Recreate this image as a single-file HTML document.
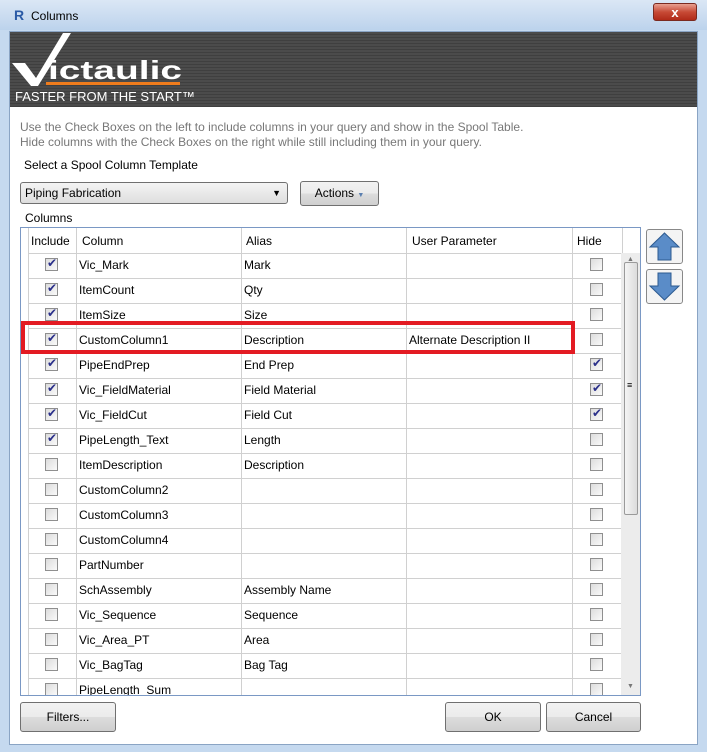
<!DOCTYPE html>
<html><head><meta charset="utf-8"><style>
body{margin:0;width:707px;height:752px;overflow:hidden;background:#c5d9ef;font-family:"Liberation Sans",sans-serif;font-size:12px;color:#000;position:relative}
.a{position:absolute}
.cb{position:absolute;width:11px;height:11px;border:1px solid #8f8f8f;background:linear-gradient(135deg,#dcdcdc,#fafafa);box-sizing:content-box}
.cb.c::after{content:"✔";position:absolute;left:1px;top:-3px;font-size:12px;color:#2a2f8a}
.btn{position:absolute;border:1px solid #707070;border-radius:3px;background:linear-gradient(#f2f2f2 0,#ebebeb 50%,#dddddd 50%,#cfcfcf 100%);text-align:center;box-sizing:border-box}
.t{position:absolute;white-space:nowrap}
</style></head><body>
<div class="a" style="left:0;top:0;width:707px;height:30px;background:linear-gradient(#dbe7f5,#bcd3ec)"></div>
<div class="a" style="left:14px;top:8px;width:10px;height:14px;color:#2a5aa6;font-weight:bold;font-size:14px;line-height:14px">R</div>
<div class="t" style="left:31px;top:9px;font-size:12px">Columns</div>
<div class="a" style="left:653px;top:3px;width:44px;height:18px;border-radius:3px;border:1px solid #7a2a20;background:linear-gradient(#e8a090,#c74a36 50%,#b02a18);color:#fff;font-weight:bold;text-align:center;line-height:17px;font-size:13px;box-sizing:border-box">x</div>
<div class="a" style="left:9px;top:31px;width:689px;height:714px;background:#fff;border:1px solid #8aa4c4;box-sizing:border-box"></div>
<div class="a" style="left:10px;top:32px;width:687px;height:75px;background:repeating-linear-gradient(#4b4b4b 0,#4b4b4b 2px,#3f3f3f 2px,#3f3f3f 3px)"></div>
<svg class="a" style="left:10px;top:32px" width="200" height="75">
<polygon points="2,31 15,31 26,46 53,1 61,1 28,54 21,54" fill="#fff"/>
<text x="38" y="47" font-family="Liberation Sans" font-weight="bold" font-size="26" fill="#fff" textLength="134" lengthAdjust="spacingAndGlyphs">ictaulic</text>
<rect x="36" y="50" width="134" height="3" fill="#f07c1c"/>
<text x="5" y="69" font-family="Liberation Sans" font-size="13" fill="#fff">FASTER FROM THE START™</text>
</svg>
<div class="t" style="left:20px;top:120px;color:#777">Use the Check Boxes on the left to include columns in your query and show in the Spool Table.</div>
<div class="t" style="left:20px;top:135px;color:#777">Hide columns with the Check Boxes on the right while still including them in your query.</div>
<div class="t" style="left:24px;top:158px">Select a Spool Column Template</div>
<div class="btn" style="left:20px;top:182px;width:268px;height:22px;text-align:left;padding-left:4px;line-height:20px;background:linear-gradient(#f4f4f4,#dedede)">Piping Fabrication<span style="position:absolute;right:6px;top:0;font-size:9px">▼</span></div>
<div class="btn" style="left:300px;top:181px;width:79px;height:25px;line-height:23px">Actions <span style="font-size:7px;color:#5a7fb0">▼</span></div>
<div class="t" style="left:25px;top:211px">Columns</div>
<div class="a" style="left:20px;top:227px;width:621px;height:469px;border:1px solid #7a98c4;box-sizing:border-box;overflow:hidden">
<div id="g"></div>
</div>
<div class="a" style="left:621px;top:253px;width:19px;height:442px;background:#ececec"></div>
<div class="a" style="left:624px;top:262px;width:14px;height:253px;border:1px solid #9a9a9a;border-radius:2px;background:linear-gradient(90deg,#f4f4f4,#dcdcdc);box-sizing:border-box"></div>
<div class="t" style="left:627px;top:383px;font-size:9px;line-height:4px">≡</div>
<div class="t" style="left:627px;top:256px;font-size:7px;color:#777">▲</div>
<div class="t" style="left:627px;top:683px;font-size:7px;color:#777">▼</div>
<div class="a" style="left:21px;top:321px;width:554px;height:33px;border:4px solid #e31b23;box-sizing:border-box"></div>
<div class="btn" style="left:646px;top:229px;width:37px;height:35px;background:#f4f4f4;border-color:#888"><svg width="35" height="33"><polygon points="17.5,3 32,17 24,17 24,30 11,30 11,17 3,17" fill="#5a8cc8" stroke="#2c5a90"/></svg></div>
<div class="btn" style="left:646px;top:269px;width:37px;height:35px;background:#f4f4f4;border-color:#888"><svg width="35" height="33"><polygon points="17.5,30 32,16 24,16 24,3 11,3 11,16 3,16" fill="#5a8cc8" stroke="#2c5a90"/></svg></div>
<div class="btn" style="left:20px;top:702px;width:96px;height:30px;line-height:28px">Filters...</div>
<div class="btn" style="left:445px;top:702px;width:96px;height:30px;line-height:28px">OK</div>
<div class="btn" style="left:546px;top:702px;width:95px;height:30px;line-height:28px">Cancel</div>
<script>
var rows=[["Vic_Mark","Mark","",1,0],["ItemCount","Qty","",1,0],["ItemSize","Size","",1,0],["CustomColumn1","Description","Alternate Description II",1,0],["PipeEndPrep","End Prep","",1,1],["Vic_FieldMaterial","Field Material","",1,1],["Vic_FieldCut","Field Cut","",1,1],["PipeLength_Text","Length","",1,0],["ItemDescription","Description","",0,0],["CustomColumn2","","",0,0],["CustomColumn3","","",0,0],["CustomColumn4","","",0,0],["PartNumber","","",0,0],["SchAssembly","Assembly Name","",0,0],["Vic_Sequence","Sequence","",0,0],["Vic_Area_PT","Area","",0,0],["Vic_BagTag","Bag Tag","",0,0],["PipeLength_Sum","","",0,0]];
var h='';var L=-21;
var xs=[28,76,241,406,572,622];
xs.forEach(function(x){h+='<div class="a" style="left:'+(x+L)+'px;top:0;width:1px;height:470px;background:#d0d0d0"></div>'});
h+='<div class="t" style="left:'+(31+L)+'px;top:6px">Include</div><div class="t" style="left:'+(82+L)+'px;top:6px">Column</div><div class="t" style="left:'+(246+L)+'px;top:6px">Alias</div><div class="t" style="left:'+(412+L)+'px;top:6px">User Parameter</div><div class="t" style="left:'+(577+L)+'px;top:6px">Hide</div>';
for(var i=0;i<=18;i++){h+='<div class="a" style="left:'+(28+L)+'px;top:'+(25+25*i)+'px;width:600px;height:1px;background:#d0d0d0"></div>';}
rows.forEach(function(r,i){var y=25+25*i;
h+='<div class="cb'+(r[3]?' c':'')+'" style="left:'+(45+L)+'px;top:'+(y+5)+'px"></div>';
h+='<div class="t" style="left:'+(79+L)+'px;top:'+(y+5)+'px">'+r[0]+'</div>';
h+='<div class="t" style="left:'+(244+L)+'px;top:'+(y+5)+'px">'+r[1]+'</div>';
h+='<div class="t" style="left:'+(409+L)+'px;top:'+(y+5)+'px">'+r[2]+'</div>';
h+='<div class="cb'+(r[4]?' c':'')+'" style="left:'+(590+L)+'px;top:'+(y+5)+'px"></div>';});
document.getElementById('g').innerHTML=h;
</script>
</body></html>
